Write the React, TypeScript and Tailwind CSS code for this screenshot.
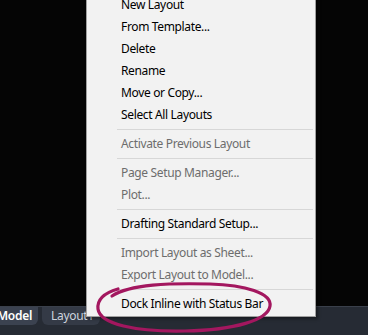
import * as React from "react"

type Item = { label: string; disabled?: boolean } | "sep"

const items: Item[] = [
  { label: "New Layout" },
  { label: "From Template..." },
  { label: "Delete" },
  { label: "Rename" },
  { label: "Move or Copy..." },
  { label: "Select All Layouts" },
  "sep",
  { label: "Activate Previous Layout", disabled: true },
  "sep",
  { label: "Page Setup Manager...", disabled: true },
  { label: "Plot...", disabled: true },
  "sep",
  { label: "Drafting Standard Setup..." },
  "sep",
  { label: "Import Layout as Sheet...", disabled: true },
  { label: "Export Layout to Model...", disabled: true },
  "sep",
  { label: "Dock Inline with Status Bar" },
]

function StatusBar() {
  return (
    <div className="mt-auto flex h-[29px] flex-col border-t border-[#3a404b] bg-[#262b34]">
      <div className="flex h-[18px] items-stretch gap-[4px]">
        <div className="flex w-[38px] items-center overflow-hidden rounded-br-[6px] bg-[#3b4250]">
          <span className="-ml-[3px] text-[12px] font-semibold leading-none tracking-[-0.3px] text-white">Model</span>
        </div>
        <div className="flex w-[58px] items-center rounded-b-[6px] bg-[#343a46] pl-[9px]">
          <span className="text-[12px] leading-none tracking-[-0.3px] text-[#ccd3dd]">Layout1</span>
        </div>
      </div>
    </div>
  )
}

function ContextMenu() {
  return (
    <div className="absolute left-[86px] top-[-7px] w-[230px] border border-[#a0a0a0] bg-[#f2f2f2] shadow-[2px_2px_3px_rgba(0,0,0,0.4)]">
      <div className="flex flex-col pb-[1px]">
        {items.map((item, i) =>
          item === "sep" ? (
            <div key={i} className="flex h-[7px] items-center pl-[30px] pr-[2px]">
              <div className="h-px w-full bg-[#d7d7d7]" />
            </div>
          ) : (
            <div
              key={i}
              className={
                item.disabled
                  ? "flex h-[22px] items-center pl-[34px] text-[12px] tracking-[-0.35px] text-[#6d6d6d]"
                  : "flex h-[22px] items-center pl-[34px] text-[12px] tracking-[-0.35px] text-black"
              }
            >
              {item.label}
            </div>
          )
        )}
      </div>
    </div>
  )
}

function Circle() {
  return (
    <svg className="pointer-events-none absolute left-0 top-0" width="368" height="335" viewBox="0 0 368 335">
      <path
        d="M112 296 C 130 284, 170 283, 210 284 C 245 285, 272 293, 270 306 C 268 320, 235 330, 185 331 C 135 332, 100 324, 98 309 C 97 300, 104 293, 118 289"
        fill="none"
        stroke="#a3175f"
        strokeWidth="3.2"
        strokeLinecap="round"
      />
    </svg>
  )
}

export default function App() {
  return (
    <div
      className="relative flex h-[335px] w-[368px] flex-col overflow-hidden bg-[#050505]"
      style={{ fontFamily: '"Noto Sans", "Open Sans", sans-serif' }}
    >
      <StatusBar />
      <ContextMenu />
      <Circle />
    </div>
  )
}
